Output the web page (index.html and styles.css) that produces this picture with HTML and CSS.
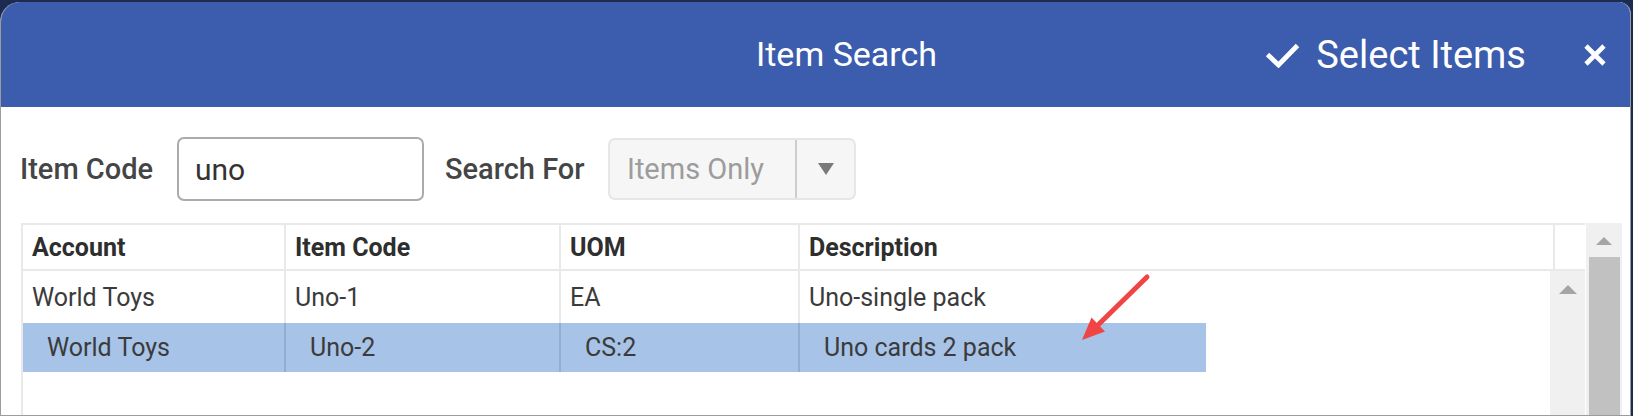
FILE: index.html
```html
<!DOCTYPE html>
<html>
<head>
<meta charset="utf-8">
<link rel="stylesheet" href="styles.css">
</head>
<body>
<div class="dialog">
  <header class="hdr">
    <h1 class="title">Item Search</h1>
    <button class="select-btn">
      <svg class="check" width="35" height="25" viewBox="0 0 35 25"><polyline points="2.5,11.5 13.5,22 32.5,2.5" fill="none" stroke="#fff" stroke-width="4.8"/></svg>
      <span>Select Items</span>
    </button>
    <button class="close">
      <svg width="24" height="22" viewBox="0 0 24 22"><path d="M3 2 L21 20 M21 2 L3 20" stroke="#fff" stroke-width="4.6" fill="none"/></svg>
    </button>
  </header>

  <div class="filters">
    <label class="lbl lbl-code">Item Code</label>
    <div class="input">uno</div>
    <label class="lbl lbl-for">Search For</label>
    <div class="select">
      <span class="sel-val">Items Only</span>
      <span class="sel-btn"><span class="tri"></span></span>
    </div>
  </div>

  <div class="grid-area">
    <div class="table">
      <div class="thead">
        <div class="th c1">Account</div>
        <div class="th c2">Item Code</div>
        <div class="th c3">UOM</div>
        <div class="th c4">Description</div>
        <div class="th corner"></div>
      </div>
      <div class="tbody">
        <div class="rows">
          <div class="row">
            <div class="td c1">World Toys</div>
            <div class="td c2">Uno-1</div>
            <div class="td c3">EA</div>
            <div class="td c4 last">Uno-single pack</div>
          </div>
          <div class="row sel">
            <div class="td c1">World Toys</div>
            <div class="td c2">Uno-2</div>
            <div class="td c3">CS:2</div>
            <div class="td c4 last">Uno cards 2 pack</div>
          </div>
        </div>
        <div class="vscroll inner"><span class="up up-inner"></span></div>
      </div>
    </div>
    <div class="vscroll outer"><span class="up up-outer"></span><div class="thumb"></div></div>
  </div>

  <svg class="annot" width="90" height="85" viewBox="0 0 90 85">
    <line x1="77" y1="12" x2="29" y2="59" stroke="#f04545" stroke-width="5" stroke-linecap="round"/>
    <polygon points="12,75 35,66.5 21.5,52.5" fill="#f04545"/>
  </svg>
</div>
</body>
</html>
```

FILE: styles.css
```css
* { box-sizing: border-box; }
html, body {
  margin: 0;
  padding: 0;
}
body {
  background: #1e2b50;
  width: 1633px;
  height: 416px;
  overflow: hidden;
  font-family: Roboto, "Liberation Sans", sans-serif;
}
.dialog {
  position: relative;
  margin-top: 2px;
  width: 1631px;
  height: 414px;
  background: #fff;
  border-left: 1px solid #9c9c9c;
  border-right: 1px solid #9c9c9c;
  border-bottom: 1px solid #9c9c9c;
  border-radius: 20px 12px 0 0;
  overflow: hidden;
  display: flex;
  flex-direction: column;
}
.hdr {
  flex: none;
  height: 105px;
  background: #3c5cad;
  display: flex;
  align-items: center;
  padding-right: 23px;
  color: #fff;
}
.title {
  margin: 0 0 0 755px;
  font-size: 34px;
  font-weight: 400;
  line-height: 1;
  padding-bottom: 2px;
}
.select-btn {
  margin-left: auto;
  display: flex;
  align-items: center;
  background: none;
  border: 0;
  padding: 0;
  color: #fff;
  font-family: inherit;
  font-size: 38px;
  font-weight: 400;
  line-height: 1;
}
.select-btn span { margin-left: 16px; }
.check { display: block; margin-top: 1px; }
.close {
  margin-left: 57px;
  background: none;
  border: 0;
  padding: 0;
  display: flex;
}
.close svg { display: block; }

.filters {
  flex: none;
  display: flex;
  align-items: center;
  padding: 30px 0 0 19px;
}
.lbl {
  font-size: 29px;
  font-weight: 500;
  color: #454545;
  line-height: 1;
}
.lbl-code { width: 157px; }
.lbl-for { margin-left: 21px; width: 163px; }
.input {
  width: 247px;
  height: 64px;
  border: 2px solid #ababab;
  border-radius: 7px;
  padding-left: 16px;
  display: flex;
  align-items: center;
  font-size: 30px;
  color: #333;
}
.select {
  width: 248px;
  height: 62px;
  border: 2px solid #e6e6e6;
  border-radius: 7px;
  background: #f6f6f6;
  display: flex;
}
.sel-val {
  flex: 1;
  display: flex;
  align-items: center;
  padding-left: 17px;
  font-size: 29px;
  color: #9c9c9c;
}
.sel-btn {
  width: 59px;
  border-left: 2px solid #cdcdcd;
  display: flex;
  align-items: center;
  justify-content: center;
}
.tri {
  width: 0;
  height: 0;
  border-left: 8.5px solid transparent;
  border-right: 8.5px solid transparent;
  border-top: 12px solid #7a7a7a;
}

.grid-area {
  flex: 1;
  min-height: 0;
  display: flex;
  margin-top: 22px;
  padding-left: 20px;
}
.table {
  width: 1564px;
  border-left: 2px solid #e9e9e9;
  border-top: 2px solid #e9e9e9;
  display: flex;
  flex-direction: column;
}
.thead {
  flex: none;
  display: flex;
  height: 46px;
  border-bottom: 2px solid #e9e9e9;
}
.th {
  border-right: 2px solid #e9e9e9;
  display: flex;
  align-items: center;
  padding-left: 9px;
  font-size: 25px;
  font-weight: 700;
  color: #2e2e2e;
}
.c1 { width: 263px; }
.c2 { width: 275px; }
.c3 { width: 239px; }
.c4 { width: 755px; }
.th.corner { width: 30px; border-right: 0; }
.tbody {
  flex: 1;
  min-height: 0;
  display: flex;
}
.rows {
  width: 1527px;
  display: flex;
  flex-direction: column;
}
.row {
  display: flex;
  height: 52px;
}
.td {
  border-right: 2px solid #e9e9e9;
  display: flex;
  align-items: center;
  padding-left: 9px;
  font-size: 25px;
  color: #3b3b3b;
}
.td.last { flex: 1; border-right: 0; }
.row.sel {
  width: 1183px;
  height: 49px;
  background: #a7c3e8;
}
.row.sel .td {
  padding-left: 24px;
  border-right-color: #93aed3;
}
.row.sel .td.last { border-right: 0; }

.vscroll {
  background: #f0f0f0;
  display: flex;
  flex-direction: column;
  align-items: center;
}
.inner { width: 35px; }
.outer {
  width: 36px;
  margin-left: 1px;
}
.up {
  width: 0;
  height: 0;
  border-left: 9px solid transparent;
  border-right: 9px solid transparent;
  border-bottom: 9px solid #a5a5a5;
}
.up-inner { margin-top: 14px; }
.up-outer {
  margin-top: 14px;
  border-left-width: 8px;
  border-right-width: 8px;
  border-bottom-width: 8px;
}
.thumb {
  margin-top: 12px;
  align-self: stretch;
  margin-left: 3px;
  margin-right: 2px;
  flex: 1;
  background: #c1c1c1;
}

.annot {
  position: absolute;
  left: 1069px;
  top: 263px;
}
```
